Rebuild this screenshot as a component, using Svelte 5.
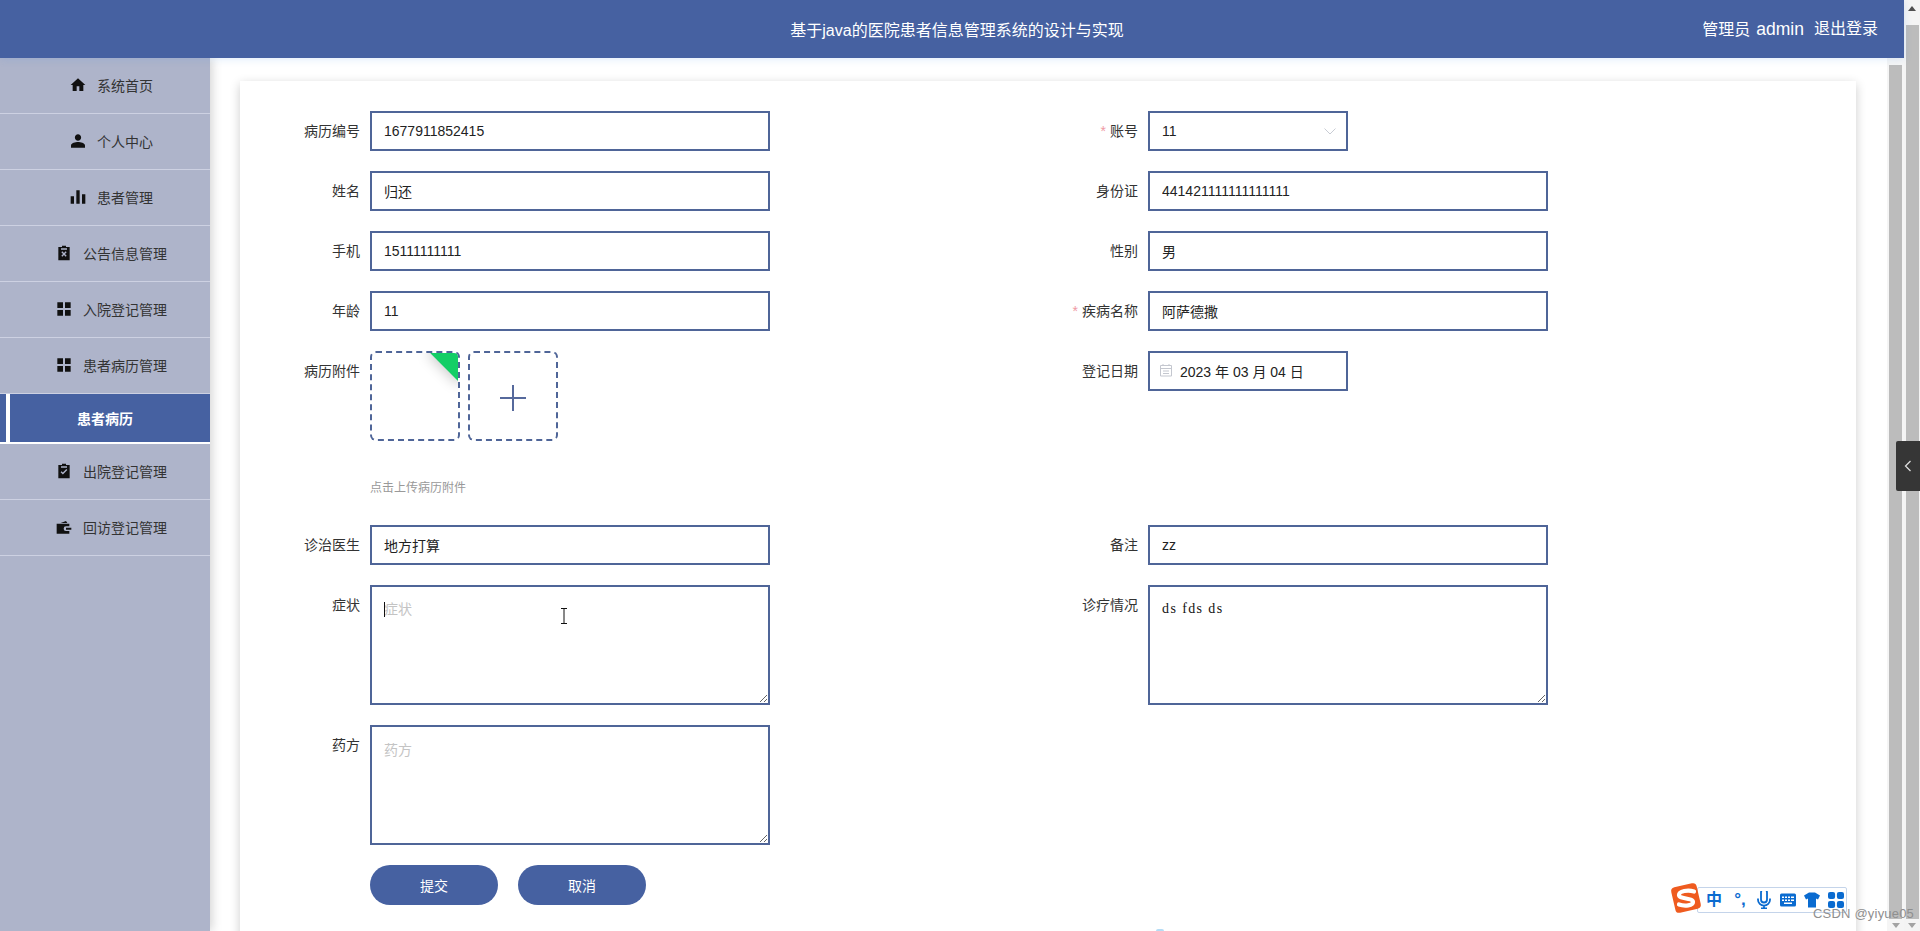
<script>
  const menu = [
    { label: '系统首页', icon: 'home' },
    { label: '个人中心', icon: 'person' },
    { label: '患者管理', icon: 'bars' },
    { label: '公告信息管理', icon: 'clipx' },
    { label: '入院登记管理', icon: 'grid' },
    { label: '患者病历管理', icon: 'grid' },
    { label: '患者病历', active: true },
    { label: '出院登记管理', icon: 'clipok' },
    { label: '回访登记管理', icon: 'wallet' }
  ];
  const paths = {
    home: 'M10 21v-7h4v7h6v-9h3L12 2 1 12h3v9z',
    person: 'M12 11.5c2.6 0 4.7-2.1 4.7-4.7S14.6 2 12 2 7.3 4.2 7.3 6.8s2.1 4.7 4.7 4.7zM12 13.6c-3.6 0-10.5 1.8-10.5 5.1V22h21v-3.3c0-3.3-6.9-5.100-10.500-5.100z',
    bars: 'M1 11h5v11H1zM9.500 2h5v20h-5zM18 8h5v14h-5z',
    clipx: 'M9 1h6v2h5.500v20h-17V3H9zM7.500 5v2h9V5zM9.500 9.500 8 11l2.500 2.500L8 16l1.500 1.500L12 15l2.500 2.500L16 16l-2.500-2.500L16 11l-1.500-1.500L12 12z',
    grid: 'M2 2h8.500v8.500H2zM13.500 2H22v8.500h-8.500zM2 13.500h8.500V22H2zM13.500 13.500H22V22h-8.500z',
    clipok: 'M9 1h6v2h5.500v20h-17V3H9zM7.500 5v2h9V5zM17 10.500l-1.500-1.400-5.200 5.300-2-2-1.400 1.400 3.400 3.500z',
    wallet: 'M15 3l2 3H7zM1 7h19v4h-5a3.500 3.500 0 0 0 0 7h5v4H1zM15 13h8v3h-8z'
  };
</script>

<div class="app">
  <div class="page">
    <header class="top">
      <div class="title">基于java的医院患者信息管理系统的设计与实现</div>
      <div class="user"><span>管理员 <span class="admin">admin</span></span><span>退出登录</span></div>
    </header>
    <div class="body">
      <nav class="side">
        {#each menu as m}
          {#if m.active}
            <div class="sub">{m.label}</div>
          {:else}
            <div class="item">
              <svg class="ic" viewBox="0 0 24 24"><path fill-rule="evenodd" d={paths[m.icon]} /></svg>
              <span>{m.label}</span>
            </div>
          {/if}
        {/each}
      </nav>
      <main class="main">
        <section class="card">
          <form class="form">
            <div class="row"><span class="lab">病历编号</span><input class="inp" value="1677911852415" readonly /></div>
            <div class="row"><span class="lab req">账号</span>
              <div class="inp short box"><span>11</span>
                <svg class="chev" viewBox="0 0 12 7"><path d="M.5.5 6 6 11.500.5" /></svg>
              </div>
            </div>
            <div class="row"><span class="lab">姓名</span><input class="inp" value="归还" readonly /></div>
            <div class="row"><span class="lab">身份证</span><input class="inp" value="441421111111111111" readonly /></div>
            <div class="row"><span class="lab">手机</span><input class="inp" value="15111111111" readonly /></div>
            <div class="row"><span class="lab">性别</span><input class="inp" value="男" readonly /></div>
            <div class="row"><span class="lab">年龄</span><input class="inp" value="11" readonly /></div>
            <div class="row"><span class="lab req">疾病名称</span><input class="inp" value="阿萨德撒" readonly /></div>
            <div class="row"><span class="lab">病历附件</span>
              <div class="upload">
                <div class="thumbs">
                  <div class="thumb"><i class="ok"></i></div>
                  <div class="thumb add">
                    <svg class="plus" viewBox="0 0 26 26"><path d="M13 0v26M0 13h26" /></svg>
                  </div>
                </div>
                <div class="tip">点击上传病历附件</div>
              </div>
            </div>
            <div class="row"><span class="lab">登记日期</span>
              <div class="inp short box date">
                <svg class="cal" viewBox="0 0 14 14"><path d="M1.500 2.500h11v10.500h-11zM1.500 5.500h11M4 1v2M10 1v2M4 8h6M4 10.500h6" /></svg>
                <span>2023 年 03 月 04 日</span>
              </div>
            </div>
            <div class="row"><span class="lab">诊治医生</span><input class="inp" value="地方打算" readonly /></div>
            <div class="row"><span class="lab">备注</span><input class="inp" value="zz" readonly /></div>
            <div class="row"><span class="lab">症状</span>
              <div class="areawrap"><textarea class="inp area" placeholder="症状" readonly></textarea><i class="caret"></i></div>
            </div>
            <div class="row"><span class="lab">诊疗情况</span><textarea class="inp area mono" readonly>ds fds ds</textarea></div>
            <div class="row"><span class="lab">药方</span><textarea class="inp area low" placeholder="药方" readonly></textarea></div>
            <div class="row"></div>
            <div class="row actions"><button type="button">提交</button><button type="button">取消</button></div>
          </form>
        </section>
      </main>
      <div class="bar inner"><i class="thumbbar"></i><i class="down"></i></div>
    </div>
  </div>
  <div class="bar outer"><i class="up"></i><i class="thumbbar"></i><i class="down"></i></div>

  <svg class="ibeam" viewBox="0 0 8 16"><path d="M1 .5h6M1 15.500h6M4 .5v15" /></svg>
  <div class="handle"><svg viewBox="0 0 8 12"><path d="M6.500 1 1.500 6l5 5" /></svg></div>
  <i class="blip"></i>

  <div class="ime">
    <svg class="logo" viewBox="0 0 32 32">
      <rect x="3" y="3" width="26" height="26" rx="4" transform="rotate(-13 16 16)" fill="#ef5b1f" />
      <path d="M24 9.500C18 7.500 9 9 9 13c0 4.500 14 2.500 14 7 0 3.500-8 4.500-14 2.500" fill="none" stroke="#fff" stroke-width="4.200" stroke-linecap="round" />
    </svg>
    <b class="cell zh">中</b>
    <b class="cell pun">°,</b>
    <span class="cell"><svg viewBox="0 0 16 18"><path d="M5 1.500a3 3 0 0 1 6 0v7a3 3 0 0 1-6 0zM2 7.500v1.200a6 6 0 0 0 12 0V7.500M8 14.500V17M5 17.500h6" /></svg></span>
    <span class="cell"><svg class="fill" viewBox="0 0 16 13"><path fill-rule="evenodd" d="M1.500 0h13A1.500 1.500 0 0 1 16 1.500v10a1.500 1.500 0 0 1-1.500 1.500h-13A1.500 1.500 0 0 1 0 11.500v-10A1.500 1.500 0 0 1 1.500 0zM2 3v1.500h2V3zM5 3v1.500h2V3zM8 3v1.500h2V3zM11 3v1.500h3V3zM2 6v1.500h2V6zM5 6v1.500h2V6zM8 6v1.500h2V6zM11 6v1.500h3V6zM4 9v1.500h8V9z" /></svg></span>
    <span class="cell"><svg class="fill" viewBox="0 0 16 15"><path d="M5 0h6l5 3-2 4-2-1v9H4V6L2 7 0 3z" /></svg></span>
    <span class="cell"><svg class="fill" viewBox="0 0 14 14"><rect width="6.200" height="6.200" rx="1.800" /><rect x="7.800" width="6.200" height="6.200" rx="1.800" /><rect y="7.800" width="6.200" height="6.200" rx="1.800" /><rect x="7.800" y="7.800" width="6.200" height="6.200" rx="1.800" /></svg></span>
  </div>
  <div class="mark">CSDN @yiyue05</div>
</div>

<style>
  :global(body) { margin: 0; background: #fff; }
  .app {
    position: relative;
    display: flex;
    height: 931px;
    overflow: hidden;
    font-family: "Liberation Sans", "Noto Sans CJK SC", sans-serif;
    font-size: 14px;
    color: #333;
  }
  .page { flex: 1; min-width: 0; display: flex; flex-direction: column; }
  .top {
    position: relative;
    z-index: 3;
    flex: none;
    height: 58px;
    background: #4661a1;
    color: #fff;
    box-shadow: 0 1px 8px rgba(70, 140, 230, .18);
    display: flex;
    align-items: center;
    justify-content: center;
  }
  .title { font-size: 16px; margin-left: 10px; margin-top: -1px; }
  .user {
    position: absolute;
    right: 26px;
    top: 0;
    line-height: 58px;
    font-size: 16px;
    display: flex;
    gap: 10px;
  }
  .admin { font-size: 17.5px; margin-left: 1.5px; }
  .body { flex: 1; min-height: 0; display: flex; }
  .side {
    position: relative;
    z-index: 2;
    flex: none;
    width: 210px;
    background: #aeb4ca;
    box-shadow: 2px 0 10px rgba(0, 0, 0, .18);
  }
  .item {
    box-sizing: border-box;
    height: 56px;
    padding: 0 0 2px 13px;
    border-bottom: 1px solid #cdd1e2;
    display: flex;
    align-items: center;
    justify-content: center;
    gap: 11px;
  }
  .ic { width: 16px; height: 16px; flex: none; fill: #111; }
  .sub {
    box-sizing: border-box;
    height: 50px;
    padding-top: 1px;
    background: #4661a1;
    color: #fff;
    font-weight: 700;
    font-size: 14px;
    line-height: 48px;
    text-align: center;
    border-bottom: 2px solid #fff;
    position: relative;
  }
  .sub::before {
    content: "";
    position: absolute;
    left: 6px;
    top: 0;
    bottom: 0;
    width: 4px;
    background: #fff;
  }
  .main { flex: 1; min-width: 0; padding: 23px 0 0 30px; overflow: hidden; }
  .card {
    box-sizing: border-box;
    width: 1616px;
    height: 1000px;
    padding: 30px;
    background: #fff;
    box-shadow: 0 3px 10px rgba(0, 0, 0, .2);
  }
  .form { display: grid; grid-template-columns: 778px 778px; }
  .row { display: flex; align-items: flex-start; margin-bottom: 20px; }
  .lab {
    flex: none;
    width: 90px;
    margin-right: 10px;
    text-align: right;
    line-height: 40px;
    color: #333;
  }
  .req::before { content: "*"; color: #ef9aa4; margin-right: 4px; }
  .inp {
    box-sizing: border-box;
    width: 400px;
    height: 40px;
    margin: 0;
    padding: 0 12px;
    border: 2px solid #4f6598;
    border-radius: 0;
    outline: none;
    background: #fff;
    color: #222;
    font: inherit;
    display: block;
  }
  .short { width: 200px; }
  .box { display: flex; align-items: center; justify-content: space-between; }
  .date { justify-content: flex-start; gap: 7px; padding-left: 9px; }
  .chev { width: 12px; height: 7px; fill: none; stroke: #c8ccd4; margin-right: -2px; }
  .cal { width: 14px; height: 14px; fill: none; stroke: #c4c7cf; flex: none; margin-top: -3px; }
  .upload { width: 400px; }
  .thumbs { display: flex; gap: 8px; }
  .thumb {
    box-sizing: border-box;
    position: relative;
    width: 90px;
    height: 90px;
    overflow: hidden;
    border: 2px dashed #4f6598;
    border-radius: 6px;
    display: flex;
    align-items: center;
    justify-content: center;
  }
  .ok {
    position: absolute;
    right: -15px;
    top: -6px;
    width: 40px;
    height: 24px;
    background: #13ce66;
    transform: rotate(45deg);
    box-shadow: 0 0 14px 2px rgba(0, 0, 0, .22);
  }
  .plus { width: 26px; height: 26px; fill: none; stroke: #56699c; stroke-width: 2; margin-top: 4px; }
  .tip { margin-top: 37px; height: 27px; line-height: 20px; font-size: 12px; color: #999; }
  .areawrap { position: relative; width: 400px; height: 120px; }
  .area {
    height: 120px;
    padding: 12px;
    line-height: 20px;
    resize: vertical;
  }
  .low { padding-top: 13px; }
  .area::placeholder { color: #c4c4c4; opacity: 1; }
  .mono { font-family: "Liberation Serif", serif; letter-spacing: 1.4px; color: #111; }
  .caret { position: absolute; left: 14px; top: 17px; width: 1px; height: 15px; background: #111; }
  .actions { padding-left: 100px; gap: 20px; }
  button {
    width: 128px;
    height: 40px;
    padding: 0;
    border: 0;
    border-radius: 20px;
    background: #4661a1;
    color: #fff;
    font: inherit;
  }
  .bar { flex: none; box-sizing: border-box; background: #f1f1f1; display: flex; flex-direction: column; align-items: center; position: relative; z-index: 1; }
  .outer { width: 16px; height: 931px; padding: 4px 0 0; background: #f4f4f4; }
  .inner { width: 17px; padding: 7px 0 0; background: #f5f5f5; }
  .thumbbar { display: block; flex: 1; width: 13px; background: #bcbcbc; }
  .up, .down { display: block; width: 0; height: 0; border-left: 4px solid transparent; border-right: 4px solid transparent; }
  .up { border-bottom: 5px solid #505050; margin: 2px 0 14px; }
  .down { border-top: 5px solid #a3a3a3; margin: 4px 0 3px; }
  .ibeam {
    position: absolute;
    left: 560px;
    top: 608px;
    width: 8px;
    height: 16px;
    fill: none;
    stroke: #111;
    stroke-width: 1;
  }
  .handle {
    position: absolute;
    right: 0;
    top: 441px;
    width: 24px;
    height: 50px;
    background: #363636;
    border-radius: 2px 0 0 2px;
    display: flex;
    align-items: center;
    justify-content: center;
    z-index: 5;
  }
  .handle svg { width: 8px; height: 12px; fill: none; stroke: #ddd; stroke-width: 1.300; }
  .blip { position: absolute; left: 1156px; top: 929px; width: 8px; height: 2px; background: #b5dcf5; border-radius: 4px 4px 0 0; }
  .ime {
    position: absolute;
    left: 1697px;
    top: 887px;
    box-sizing: border-box;
    width: 150px;
    height: 26px;
    padding-left: 4px;
    background: #fff;
    border: 1px solid #c4d4ea;
    border-radius: 2px;
    display: flex;
    align-items: center;
    z-index: 4;
    color: #0a6bd0;
  }
  .logo { position: absolute; left: -28px; top: -6px; width: 32px; height: 32px; }
  .cell { flex: none; width: 24px; display: flex; align-items: center; justify-content: center; font-size: 16px; line-height: 1; }
  .cell svg { width: 16px; height: 18px; fill: none; stroke: #0a6bd0; stroke-width: 1.800; }
  .cell svg.fill { fill: #0a6bd0; stroke: none; }
  .zh { font-weight: 700; }
  .pun { font-weight: 700; font-size: 17px; margin: -2px 0 0 2px; }
  .mark {
    position: absolute;
    left: 1813px;
    top: 906px;
    font-size: 13px;
    letter-spacing: .2px;
    line-height: 16px;
    color: #8f8f8f;
    white-space: nowrap;
    z-index: 6;
  }
</style>
